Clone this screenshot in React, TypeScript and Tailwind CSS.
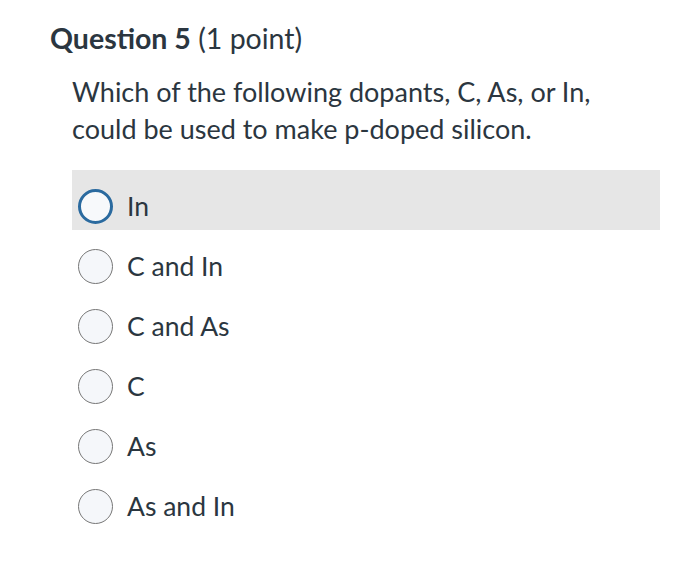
import React from "react";

const options = ["In", "C and In", "C and As", "C", "As", "As and In"];

export default function App() {
  return (
    <div
      className="w-[700px] h-[564px] bg-white text-[#2b3640]"
      style={{ fontFamily: "Lato, 'Liberation Sans', sans-serif" }}
    >
      <div className="pl-[50px] pt-[20px]">
        <h2 className="text-[28.5px] leading-[36px]">
          <span className="font-bold">Question 5</span>{" "}
          <span className="font-normal">(1 point)</span>
        </h2>
      </div>
      <div className="pl-[72px] pr-[20px] pt-[17px]">
        <p className="text-[27px] leading-[37px]">
          Which of the following dopants, C, As, or In,
          <br />
          could be used to make p-doped silicon.
        </p>
      </div>
      <div className="ml-[72px] w-[588px] mt-[23px]">
        {options.map((o, i) => (
          <div
            key={o}
            className={
              i === 0
                ? "h-[60px] flex items-start pt-[19px] pl-[6px] bg-[#e6e6e6]"
                : "h-[60px] flex items-start pt-[19px] pl-[6px]"
            }
          >
            <span
              className={
                i === 0
                  ? "w-[35px] h-[35px] rounded-full border-[3px] border-[#2a6a9f] bg-[#f7f9fb] box-border shrink-0"
                  : "w-[35px] h-[35px] rounded-full border-[1.75px] border-[#777777] bg-[#f5f7fa] box-border shrink-0"
              }
            />
            <span className="ml-[14px] text-[26.5px] leading-[35px]">{o}</span>
          </div>
        ))}
      </div>
    </div>
  );
}
